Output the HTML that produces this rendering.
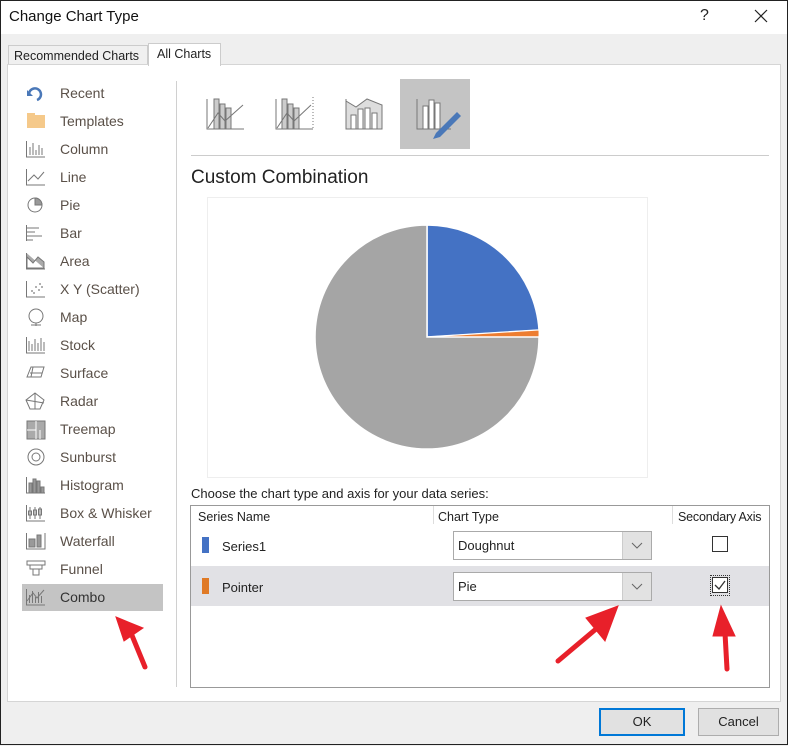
<!DOCTYPE html>
<html><head><meta charset="utf-8"><style>
*{margin:0;padding:0;box-sizing:border-box}
body{width:788px;height:745px;background:#efefef;font-family:"Liberation Sans",sans-serif;position:relative;overflow:hidden;border:1px solid #222;}
.a{position:absolute;white-space:nowrap}
.li{position:absolute;left:59px;font-size:14px;color:#5a5048}
</style></head><body>
<div class="a" style="left:0;top:0;width:786px;height:33px;background:#fff"></div>
<div class="a" style="left:8px;top:7px;font-size:15px;color:#111">Change Chart Type</div>
<div class="a" style="left:699px;top:6px;font-size:16px;color:#222">?</div>
<svg class="a" style="left:753px;top:8px" width="14" height="14"><path d="M1 1L13 13M13 1L1 13" stroke="#222" stroke-width="1.2"/></svg>
<div class="a" style="left:7px;top:44px;width:140px;height:20px;border:1px solid #ccc;border-bottom:none;background:#f0f0f0;font-size:12.5px;color:#222;padding:3px 5px">Recommended Charts</div>
<div class="a" style="left:147px;top:42px;width:73px;height:23px;border:1px solid #ccc;border-bottom:none;background:#fff;font-size:12.5px;color:#222;padding:3px 8px;z-index:2">All Charts</div>
<div class="a" style="left:6px;top:63px;width:774px;height:638px;background:#fff;border:1px solid #d5d5d5"></div>
<div class="a" style="left:175px;top:80px;width:1px;height:606px;background:#d0d0d0"></div>
<div class="a" style="left:21px;top:583px;width:141px;height:27px;background:#c4c4c4"></div>

<svg class="a" style="left:24px;top:84px" width="24" height="524">
<g stroke="#777" fill="none" stroke-width="1">
<path d="M4 10 A6 6 0 1 1 12 15" stroke="#4a78b8" stroke-width="2.5"/><path d="M2 5 L8 11 L2 11Z" fill="#4a78b8" stroke="none"/>
<rect x="2" y="30" width="18" height="13" fill="#f5c98a" stroke="none"/><rect x="2" y="28" width="8" height="3" fill="#f5c98a" stroke="none"/>
<path d="M1.5 56V72H20M5 70V62M8 70V58M11 70V65M14 70V60M17 70V63"/>
<path d="M1.5 84V100H20M3 96L9 90L13 94L19 87"/>
<circle cx="10" cy="120" r="7"/><path d="M10 120V113A7 7 0 0 1 17 120Z" fill="#999"/>
<path d="M1.5 140V156M2 143H14M2 147H10M2 151H17M2 155H8"/>
<path d="M1.5 168V184H20M2 172L8 178L13 172L19 177V183H2Z" fill="#aaa"/>
<path d="M1.5 196V212H20" /><g fill="#999" stroke="none"><circle cx="7" cy="206" r="1"/><circle cx="11" cy="202" r="1"/><circle cx="15" cy="199" r="1"/><circle cx="9" cy="208" r="1"/><circle cx="14" cy="205" r="1"/><circle cx="17" cy="202" r="1"/></g>
<circle cx="11" cy="231" r="7"/><path d="M6 240H16M11 238V241"/>
<path d="M1.5 252V268H20M4 266V256M7 266V259M10 266V254M13 266V258M16 266V253M19 266V257"/>
<path d="M2 292L6 282H19L16 292ZM5 288H17M8 282L6 292"/>
<path d="M10 308L19 315L15 324H5L1 315ZM10 308V324M1 315L19 318"/>
<rect x="2" y="336" width="18" height="18" fill="#aaa"/><path d="M11 336V354M2 345H11M15 345V354" stroke="#fff"/>
<circle cx="11" cy="372" r="8"/><circle cx="11" cy="372" r="4"/>
<path d="M1.5 392V408H20" /><rect x="4" y="398" width="3" height="10" fill="#999"/><rect x="8" y="394" width="3" height="14" fill="#999"/><rect x="12" y="396" width="3" height="12" fill="#999"/><rect x="16" y="402" width="3" height="6" fill="#999"/>
<path d="M1.5 420V436H20M5 422V434M10 422V434M15 422V434"/><rect x="3.5" y="426" width="3" height="4"/><rect x="8.5" y="425" width="3" height="5"/><rect x="13.5" y="424" width="3" height="6"/>
<path d="M1.5 448V464H20V448" /><rect x="4" y="454" width="6" height="8" fill="#999"/><rect x="12" y="450" width="4" height="12" fill="#999"/>
<path d="M2 476H20V480H2ZM5 480H17V484H5ZM8 484H14V490H8Z"/>
<path d="M1.5 504V520H20M4.5 518V510M7.5 518V506M10.5 518V512M13.5 518V507M16.5 518V511M2 516L8 508L12 513L19 505"/>
</g></svg>
<div class="li" style="top:84px">Recent</div>
<div class="li" style="top:112px">Templates</div>
<div class="li" style="top:140px">Column</div>
<div class="li" style="top:168px">Line</div>
<div class="li" style="top:196px">Pie</div>
<div class="li" style="top:224px">Bar</div>
<div class="li" style="top:252px">Area</div>
<div class="li" style="top:280px">X Y (Scatter)</div>
<div class="li" style="top:308px">Map</div>
<div class="li" style="top:336px">Stock</div>
<div class="li" style="top:364px">Surface</div>
<div class="li" style="top:392px">Radar</div>
<div class="li" style="top:420px">Treemap</div>
<div class="li" style="top:448px">Sunburst</div>
<div class="li" style="top:476px">Histogram</div>
<div class="li" style="top:504px">Box &amp; Whisker</div>
<div class="li" style="top:532px">Waterfall</div>
<div class="li" style="top:560px">Funnel</div>
<div class="li" style="top:588px;color:#333">Combo</div>

<div class="a" style="left:399px;top:78px;width:70px;height:70px;background:#c4c4c4"></div>
<svg class="a" style="left:200px;top:90px" width="280" height="50">
<g stroke="#777" fill="none">
<path d="M6 8V38H43"/><rect x="13" y="8" width="5" height="30" fill="#ccc"/><rect x="19" y="13" width="5" height="25" fill="#ccc"/><rect x="25" y="17" width="5" height="21" fill="#ccc"/><path d="M7 37L17 22L24 30L42 14"/>
<path d="M75 8V38H112"/><rect x="81" y="8" width="5" height="30" fill="#ccc"/><rect x="87" y="13" width="5" height="25" fill="#ccc"/><rect x="93" y="17" width="5" height="21" fill="#ccc"/><path d="M76 37L86 22L93 30L110 14"/><path d="M112 6V38" stroke-dasharray="1 2"/>
<path d="M145 8V38H181V14L166 8L155 16L145 10Z" fill="#ddd"/><rect x="150" y="24" width="5" height="14" fill="#fff"/><rect x="157" y="18" width="5" height="20" fill="#fff"/><rect x="164" y="17" width="5" height="21" fill="#fff"/><rect x="171" y="22" width="5" height="16" fill="#fff"/>
<path d="M216 8V38H250"/><rect x="222" y="15" width="5" height="23" fill="#fff"/><rect x="228" y="9" width="5" height="29" fill="#fff"/><rect x="234" y="12" width="5" height="26" fill="#fff"/>
<path d="M232 48L235 42L256 21L260 25L239 46Z" fill="#4a78b8" stroke="none"/>
</g></svg>
<div class="a" style="left:190px;top:154px;width:578px;height:1px;background:#ccc"></div>
<div class="a" style="left:190px;top:166px;font-size:19px;color:#222">Custom Combination</div>
<div class="a" style="left:206px;top:196px;width:441px;height:281px;border:1px solid #eee"></div>
<svg class="a" style="left:310px;top:220px" width="232" height="232">
<path d="M116 116L116 4A112 112 0 0 1 228 109Z" fill="#4472c4" stroke="#fff" stroke-width="1.5"/>
<path d="M116 116L228 109A112 112 0 0 1 228 116Z" fill="#ed7d31" stroke="#fff" stroke-width="1"/>
<path d="M116 116L228 116A112 112 0 1 1 116 4Z" fill="#a5a5a5" stroke="#fff" stroke-width="1.5"/>
</svg>
<div class="a" style="left:190px;top:485px;font-size:13px;color:#222">Choose the chart type and axis for your data series:</div>
<div class="a" style="left:189px;top:504px;width:580px;height:183px;border:1px solid #999;background:#fff"></div>
<div class="a" style="left:197px;top:509px;font-size:12.5px;color:#222">Series Name</div>
<div class="a" style="left:432px;top:505px;width:1px;height:18px;background:#ddd"></div>
<div class="a" style="left:437px;top:509px;font-size:12.5px;color:#222">Chart Type</div>
<div class="a" style="left:671px;top:505px;width:1px;height:18px;background:#ddd"></div>
<div class="a" style="left:677px;top:509px;font-size:12.5px;color:#222;letter-spacing:-0.2px">Secondary Axis</div>
<div class="a" style="left:201px;top:536px;width:7px;height:16px;background:#4472c4"></div>
<div class="a" style="left:221px;top:538px;font-size:13px;color:#222">Series1</div>
<div class="a" style="left:452px;top:530px;width:199px;height:29px;border:1px solid #aaa;background:#fff;font-size:13px;padding:6px 4px;color:#222">Doughnut</div>
<div class="a" style="left:621px;top:531px;width:29px;height:27px;background:#e2e2e2;border-left:1px solid #ccc"></div>
<svg class="a" style="left:630px;top:540px" width="12" height="8"><path d="M1 2L6 7L11 2" stroke="#666" fill="none"/></svg>
<div class="a" style="left:711px;top:535px;width:16px;height:16px;border:1px solid #333;background:#fff"></div>
<div class="a" style="left:190px;top:565px;width:578px;height:40px;background:#e1e1e5"></div>
<div class="a" style="left:201px;top:577px;width:7px;height:16px;background:#e07a26"></div>
<div class="a" style="left:221px;top:579px;font-size:13px;color:#222">Pointer</div>
<div class="a" style="left:452px;top:571px;width:199px;height:29px;border:1px solid #aaa;background:#fff;font-size:13px;padding:6px 4px;color:#222">Pie</div>
<div class="a" style="left:621px;top:572px;width:29px;height:27px;background:#e2e2e2;border-left:1px solid #ccc"></div>
<svg class="a" style="left:630px;top:581px" width="12" height="8"><path d="M1 2L6 7L11 2" stroke="#666" fill="none"/></svg>
<div class="a" style="left:709px;top:574px;width:20px;height:21px;border:1px dotted #333"></div>
<div class="a" style="left:711px;top:576px;width:16px;height:16px;border:1px solid #333;background:#fff"></div>
<svg class="a" style="left:712px;top:577px" width="14" height="14"><path d="M2 7L6 11L12 3" stroke="#333" fill="none" stroke-width="1.3"/></svg>

<svg class="a" style="left:0;top:0" width="788" height="745">
<g stroke="#e8202a" stroke-width="5" stroke-linecap="round" fill="#e8202a">
<path d="M144 666L130 632"/><path d="M115 616L142 627L123 640Z" stroke-width="1"/>
<path d="M557 660L595 628"/><path d="M617 605L604 640L585 617Z" stroke-width="1"/>
<path d="M726 668L724 632"/><path d="M720 605L734 635L712 635Z" stroke-width="1"/>
</g></svg>

<div class="a" style="left:598px;top:707px;width:86px;height:28px;border:2px solid #0078d7;background:#e1e1e1;font-size:13px;text-align:center;line-height:24px;color:#222">OK</div>
<div class="a" style="left:697px;top:707px;width:81px;height:28px;border:1px solid #adadad;background:#e1e1e1;font-size:13px;text-align:center;line-height:26px;color:#222">Cancel</div>
</body></html>
